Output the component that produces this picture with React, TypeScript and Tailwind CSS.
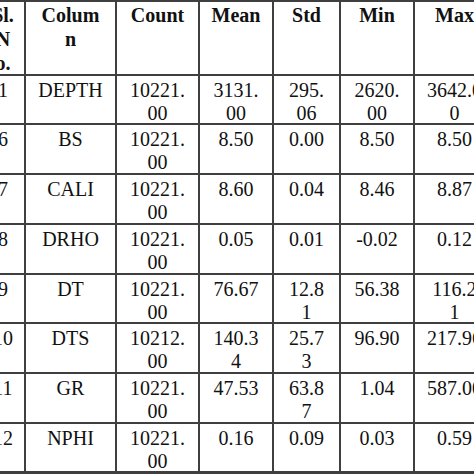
import React from "react";

type Row = { cells: React.ReactNode[]; h: string; last?: boolean };

const L = (a: string, b?: string) =>
  b ? (
    <>
      {a}
      <br />
      {b}
    </>
  ) : (
    a
  );

const rows: Row[] = [
  { h: "h-[49px]", cells: ["1", "DEPTH", L("10221.", "00"), L("3131.", "00"), L("295.", "06"), L("2620.", "00"), L("3642.0", "0")] },
  { h: "h-[50px]", cells: ["6", "BS", L("10221.", "00"), "8.50", "0.00", "8.50", "8.50"] },
  { h: "h-[50px]", cells: ["7", "CALI", L("10221.", "00"), "8.60", "0.04", "8.46", "8.87"] },
  { h: "h-[50px]", cells: ["8", "DRHO", L("10221.", "00"), "0.05", "0.01", "-0.02", "0.12"] },
  { h: "h-[49px]", cells: ["9", "DT", L("10221.", "00"), "76.67", L("12.8", "1"), "56.38", L("116.2", "1")] },
  { h: "h-[50px]", cells: ["10", "DTS", L("10212.", "00"), L("140.3", "4"), L("25.7", "3"), "96.90", "217.96"] },
  { h: "h-[50px]", cells: ["11", "GR", L("10221.", "00"), "47.53", L("63.8", "7"), "1.04", "587.00"] },
  { h: "h-[50px]", last: true, cells: ["12", "NPHI", L("10221.", "00"), "0.16", "0.09", "0.03", "0.59"] },
];

const widths = ["w-[44px]", "w-[91px]", "w-[83px]", "w-[74px]", "w-[67px]", "w-[74px]", "w-[81px]"];

const header: React.ReactNode[] = [
  <>
    Sl.
    <br />N<br />
    o.
  </>,
  L("Colum", "n"),
  "Count",
  "Mean",
  "Std",
  "Min",
  "Max",
];

export default function App() {
  return (
    <div
      className="w-[474px] h-[474px] overflow-hidden bg-white text-[#111]"
      style={{ fontFamily: '"Liberation Serif", "Times New Roman", serif' }}
    >
      <div className="ml-[-18px] w-[514px] border-t-2 border-[#3f3f3f] text-[20px]">
        <div className="flex h-[74px]">
          {header.map((c, i) => (
            <div
              key={i}
              className={`${widths[i]} shrink-0 border-b-2 border-r-2 border-[#3f3f3f] pt-[1px] text-center font-bold leading-[24px]`}
            >
              {c}
            </div>
          ))}
        </div>
        {rows.map((r, ri) => (
          <div key={ri} className={`flex ${r.h}`}>
            {r.cells.map((c, i) => (
              <div
                key={i}
                className={`${widths[i]} shrink-0 border-r-2 ${r.last ? "border-b-[3px]" : "border-b-2"} border-[#3f3f3f] pt-[3px] text-center leading-[23px] whitespace-nowrap`}
              >
                {c}
              </div>
            ))}
          </div>
        ))}
      </div>
    </div>
  );
}
